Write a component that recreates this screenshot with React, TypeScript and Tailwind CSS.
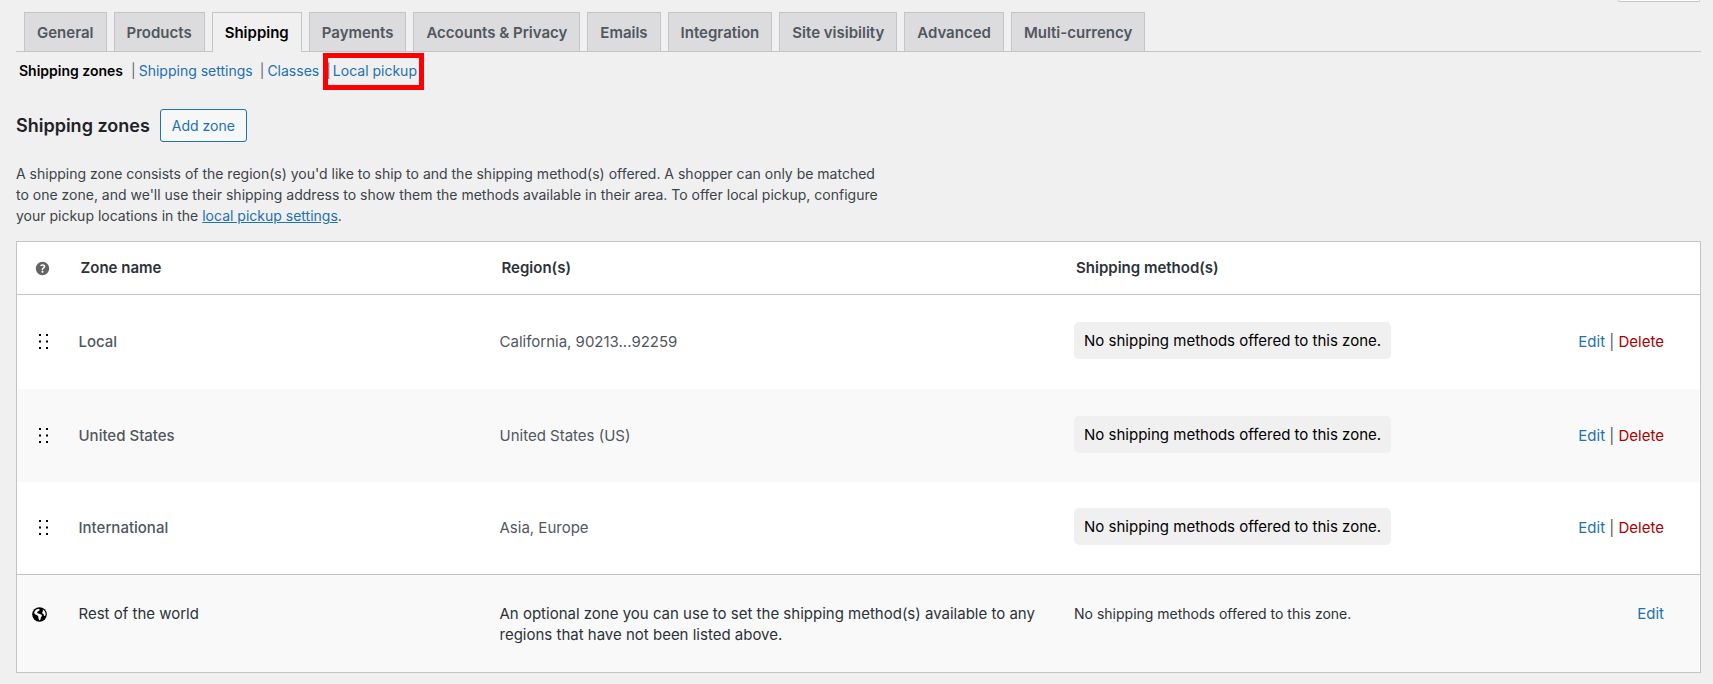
import React from "react";

const tabs = [
  "General",
  "Products",
  "Shipping",
  "Payments",
  "Accounts & Privacy",
  "Emails",
  "Integration",
  "Site visibility",
  "Advanced",
  "Multi-currency",
];

const zones = [
  { name: "Local", regions: "California, 90213...92259" },
  { name: "United States", regions: "United States (US)" },
  { name: "International", regions: "Asia, Europe" },
];

function HelpIcon() {
  return (
    <svg viewBox="0 0 20 20" className="block w-[19px] h-[19px]" fill="#646464" role="img" aria-label="Help">
      <path d="M17 10c0-3.87-3.14-7-7-7-3.87 0-7 3.13-7 7s3.13 7 7 7c3.86 0 7-3.13 7-7zm-6.3 1.48H9.14v-.43c0-.38.08-.7.24-.98s.46-.57.88-.89c.41-.29.68-.53.81-.71.14-.18.2-.39.2-.62 0-.25-.09-.44-.28-.58-.19-.13-.45-.19-.79-.19-.58 0-1.25.19-2 .57l-.64-1.28c.87-.49 1.8-.74 2.77-.74.81 0 1.45.2 1.92.58.48.39.71.91.71 1.55 0 .43-.09.8-.29 1.11-.19.32-.57.67-1.11 1.06-.38.28-.61.49-.71.63-.1.15-.15.34-.15.57v.35zm-1.47 2.74c-.18-.17-.27-.42-.27-.73 0-.33.08-.58.26-.75s.43-.25.77-.25c.32 0 .57.09.75.26s.27.42.27.74c0 .3-.09.55-.27.72-.18.18-.43.27-.75.27-.33 0-.58-.09-.76-.26z" />
    </svg>
  );
}

function GlobeIcon() {
  return (
    <svg viewBox="0 0 20 20" className="block w-[17px] h-[17px]" aria-hidden="true">
      <circle cx="10" cy="10" r="8.600" fill="#000" />
      <path
        fill="#f9f9f9"
        d="M6.200 4.200 9 3.200l1.300 1.200-.9 1.600-1.700.6-.6 1.500 1.700.7 3.100 1.200 1.200 1.600-1.400 2-.5 2.300-1.300 1.200-1.200-2.600-.2-2.400-1.700-1.400-2.200-.9-.9-1.900.8-1.900zM13.600 3.800l2.200 1.800 1.300 2.500.1 2.600-1 1.200-1-.5-.5-1.900-1.300-.8-.3-1.700 1.100-1.200z"
      />
    </svg>
  );
}

function SortHandle() {
  return (
    <svg viewBox="0 0 9 15" className="block w-[9px] h-[15px]" fill="#000" aria-hidden="true">
      <path d="M0 0h2v2H0zM7 0h2v2H7zM0 6.500h2v2H0zM7 6.500h2v2H7zM0 13h2v2H0zM7 13h2v2H7z" />
    </svg>
  );
}

export default function App() {
  return (
    <div className="min-h-screen bg-[#f0f0f0] pl-4 pr-3 font-[Inter,sans-serif] text-[#3c434a]">
      <div className="h-[2px] w-[82px] ml-auto mr-px rounded-b border border-t-0 border-[#c3c4c7] bg-white" />

      <nav className="mt-[10px] flex gap-[7px] border-b border-[#c3c4c7] pl-2">
        {tabs.map((tab) => (
          <a
            key={tab}
            href="#"
            className={
              tab === "Shipping"
                ? "-mb-px border border-b-0 border-[#c3c4c7] bg-[#f0f0f0] px-3 pt-2 pb-[7px] text-[15px] leading-6 font-semibold text-black"
                : "border border-b-0 border-[#c3c4c7] bg-[#dcdcde] px-3 pt-2 pb-[6px] text-[15px] leading-6 font-semibold text-[#50575e]"
            }
          >
            {tab}
          </a>
        ))}
      </nav>

      <ul className="mt-[7px] flex pl-[3px] text-sm leading-6 text-[#646970]">
        <li><a href="#" className="font-semibold text-black">Shipping zones</a></li>
        <li className="ml-2">|<a href="#" className="ml-[3px] text-[#2271b1]">Shipping settings</a></li>
        <li className="ml-[7px]">|<a href="#" className="ml-[3px] text-[#2271b1]">Classes</a></li>
        <li className="relative ml-[7px]">
          |<a href="#" className="ml-[2px] text-[#2271b1]">Local pickup</a>
          <span className="absolute -top-[6px] -right-[7px] -bottom-[7px] -left-[3px] border-[5px] border-[#fe0000]" />
        </li>
      </ul>

      <div className="mt-[26px] flex items-center gap-[10px]">
        <h2 className="text-lg font-semibold text-[#1d2327]">Shipping zones</h2>
        <button className="h-[33px] rounded-[3px] border border-[#2271b1] bg-[#f6f7f7] px-[11px] text-sm text-[#2271b1]">
          Add zone
        </button>
      </div>

      <p className="mt-[21px] max-w-[868px] text-sm leading-[21px]">
        A shipping zone consists of the region(s) you'd like to ship to and the shipping method(s) offered. A shopper can only be matched
        to one zone, and we'll use their shipping address to show them the methods available in their area. To offer local pickup, configure
        your pickup locations in the <a href="#" className="text-[#2271b1] underline">local pickup settings</a>.
      </p>

      <table className="mt-[15px] w-full table-fixed border-collapse border border-[#c3c4c7] bg-white text-left text-[15px] leading-[21px]">
        <colgroup>
          <col className="w-[62px]" />
          <col className="w-[25%]" />
          <col className="w-[34%]" />
          <col />
          <col className="w-[140px]" />
        </colgroup>
        <thead>
          <tr className="h-[53px] border-b border-[#c3c4c7] text-[#2c3338]">
            <th className="pl-4"><HelpIcon /></th>
            <th className="pl-[2px] pb-[2px] font-semibold">Zone name</th>
            <th className="pl-[2px] pb-[2px] font-semibold">Region(s)</th>
            <th className="pl-1 pb-[2px] font-semibold">Shipping method(s)</th>
            <th />
          </tr>
        </thead>
        <tbody>
          {zones.map((zone) => (
            <tr key={zone.name} className="h-[93px] first:h-[94px] text-[#50575e] even:bg-[#f9f9f9]">
              <td className="pl-[22px]"><SortHandle /></td>
              <td className="font-medium">{zone.name}</td>
              <td>{zone.regions}</td>
              <td className="pl-[2px] pb-[2px]">
                <span className="inline-block rounded-[5px] bg-[#f0f0f0] px-[10px] py-2 text-black">
                  No shipping methods offered to this zone.
                </span>
              </td>
              <td className="pr-9 text-right whitespace-nowrap">
                <a href="#" className="text-[#2271b1]">Edit</a> | <a href="#" className="text-[#a00]">Delete</a>
              </td>
            </tr>
          ))}
        </tbody>
        <tfoot>
          <tr className="h-[98px] border-t border-[#c3c4c7] bg-[#f9f9f9] align-top text-[#2c3338]">
            <td className="pt-[31px] pl-[14px]"><GlobeIcon /></td>
            <td className="pt-7">Rest of the world</td>
            <td className="pt-7 pr-6">
              An optional zone you can use to set the shipping method(s) available to any regions that have not been listed above.
            </td>
            <td className="pt-7 pl-[2px] text-sm leading-[21px]">No shipping methods offered to this zone.</td>
            <td className="pt-7 pr-9 text-right"><a href="#" className="text-[#2271b1]">Edit</a></td>
          </tr>
        </tfoot>
      </table>
    </div>
  );
}
